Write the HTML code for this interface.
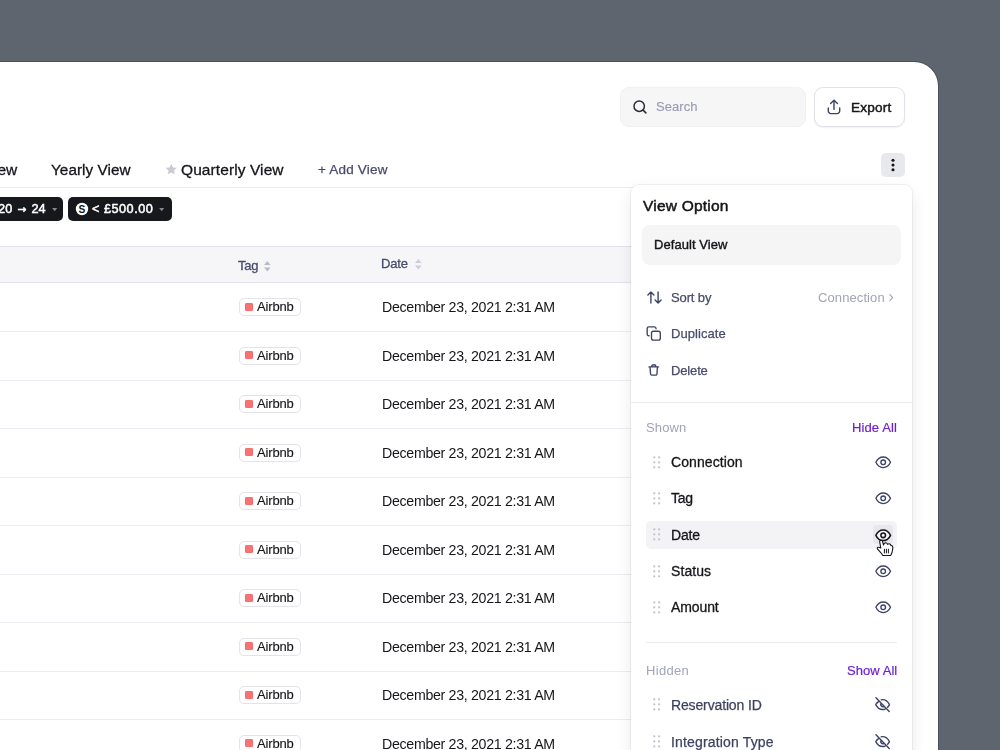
<!DOCTYPE html>
<html lang="en"><head><meta charset="utf-8"><title>View Option</title>
<style>
*{box-sizing:border-box;margin:0;padding:0}
html,body{width:1000px;height:750px;overflow:hidden;background:#5e656e;font-family:"Liberation Sans",sans-serif;color:#15161a}
.abs,.t{position:absolute}
.t{white-space:nowrap;line-height:20px;height:20px;will-change:transform}
#card{position:absolute;left:-40px;top:62px;width:978px;height:720px;background:#fff;border-radius:24px;box-shadow:0 0 0 1px rgba(60,66,78,.55)}
.hl{position:absolute;height:1px;background:#e6e6ef}
.chip{position:absolute;top:197px;height:24px;background:#17181c;border-radius:5px;color:#fff}
.tag{position:absolute;left:238.5px;width:62px;height:18px;border:1px solid #e3e3e9;border-radius:5px;background:#fff}
.tag i{position:absolute;left:5.7px;top:3.7px;width:7.8px;height:7.8px;border-radius:1.8px;background:#f87272;box-shadow:inset 0 0 0 .6px #f56a6a}
#panel{position:absolute;left:631.4px;top:184.6px;width:281px;height:600px;background:#fff;border-radius:8px;box-shadow:0 0 0 1px rgba(20,20,40,.05),0 5px 16px rgba(20,20,40,.085)}
svg{position:absolute;overflow:visible}
</style></head><body>
<div id="card"></div>

<div class="abs" style="left:620px;top:87px;width:186px;height:40px;background:#f6f6f7;border-radius:9px;border:1px solid #f1f1f3"></div>
<svg style="left:632px;top:99px" width="16" height="16" viewBox="0 0 16 16" fill="none" stroke="#2c2e36" stroke-width="1.5" stroke-linecap="round"><circle cx="7.2" cy="7.2" r="5.2"/><path d="M11.1 11.1L13.9 13.9"/></svg>
<div class="t" style="left:656px;top:97.00px;font-size:13px;color:#999db4;letter-spacing:0.06px;-webkit-text-stroke:0.15px #999db4">Search</div>
<div class="abs" style="left:814px;top:87px;width:91px;height:40px;background:#fff;border-radius:9px;border:1px solid #e2e2e8;box-shadow:0 1px 2px rgba(20,20,40,.06)"></div>
<svg style="left:826.4px;top:99px" width="16" height="16" viewBox="0 0 16 16" fill="none" stroke="#3d4266" stroke-width="1.4" stroke-linecap="round" stroke-linejoin="round"><path d="M8 10.4V1.5M4.6 4.6L8 1.2l3.400 3.400M2.300 9v3a2.600 2.600 0 0 0 2.600 2.600h6.200a2.600 2.600 0 0 0 2.600-2.600V9"/></svg>
<div class="t" style="left:851px;top:98.00px;font-size:13.6px;color:#15161a;letter-spacing:0.2px;-webkit-text-stroke:0.45px #15161a">Export</div>
<div class="t" style="left:-6px;top:160.00px;font-size:15.5px;color:#15161a;-webkit-text-stroke:0.3px #15161a">iew</div>
<div class="t" style="left:51px;top:160.00px;font-size:15.3px;color:#15161a;letter-spacing:0.04px;-webkit-text-stroke:0.3px #15161a">Yearly View</div>
<svg style="left:164.500px;top:163.200px" width="12.500" height="12.500" viewBox="0 0 24 24" fill="#c9cad3"><path d="M12 1.5l3.2 6.9 7.5.9-5.5 5.1 1.5 7.4L12 18.1l-6.7 3.7 1.5-7.4L1.3 9.3l7.5-.9z"/></svg>
<div class="t" style="left:181px;top:160.00px;font-size:15.5px;color:#15161a;letter-spacing:0.09px;-webkit-text-stroke:0.3px #15161a">Quarterly View</div>
<div class="t" style="left:318px;top:160.00px;font-size:13.5px;color:#474c6b;letter-spacing:0.2px;-webkit-text-stroke:0.25px #474c6b">+ Add View</div>
<div class="hl" style="left:0;top:187px;width:905px;background:#ececf1"></div>
<div class="abs" style="left:881px;top:152.5px;width:24px;height:24px;background:#e8e9ed;border-radius:5px"></div>
<svg style="left:881px;top:152.5px" width="24" height="24" viewBox="0 0 24 24" fill="#15161a"><circle cx="12" cy="7.2" r="1.55"/><circle cx="12" cy="12" r="1.55"/><circle cx="12" cy="16.8" r="1.55"/></svg>
<div class="chip" style="left:-60px;width:123px">
<div class="t" style="left:58px;top:2.00px;font-size:12.7px;color:#fff;letter-spacing:0.1px;-webkit-text-stroke:0.5px #fff">20 <span style="font-family:'DejaVu Sans',sans-serif;font-size:10.6px;letter-spacing:0;margin:0 1.3px 0 1.7px">→</span> 24</div>
<svg style="left:112px;top:10.5px" width="5.4" height="3.4" viewBox="0 0 6 4" fill="#85878f"><path d="M0 0h6L3 3.8z"/></svg></div>
<div class="chip" style="left:67.7px;width:104.6px"><svg style="left:7.2px;top:5px" width="14" height="14" viewBox="0 0 14 14"><circle cx="7" cy="7" r="6.2" fill="#fff"/><text x="7" y="10.6" text-anchor="middle" font-size="10.2" font-weight="bold" fill="#17181c" font-family="Liberation Sans, sans-serif">S</text></svg>
<div class="t" style="left:24.3px;top:2.00px;font-size:12.7px;color:#fff;letter-spacing:0.5px;-webkit-text-stroke:0.5px #fff">&lt; £500.00</div>
<svg style="left:91.5px;top:10.5px" width="5.4" height="3.4" viewBox="0 0 6 4" fill="#85878f"><path d="M0 0h6L3 3.8z"/></svg></div>
<div class="abs" style="left:0;top:246px;width:905px;height:36.500px;background:#f6f6f8;border-top:1px solid #e3e3ee;border-bottom:1px solid #e3e3ee"></div>
<div class="t" style="left:238px;top:256.00px;font-size:13px;color:#474c6b;letter-spacing:-0.25px;-webkit-text-stroke:0.3px #474c6b">Tag</div>
<svg style="left:263.7px;top:260.8px" width="6.6" height="10.4" viewBox="0 0 7 11" fill="#b9bac6"><path d="M0 4.200L3.500 0 7 4.200z"/><path d="M0 6.800L3.500 11 7 6.800z"/></svg>
<div class="t" style="left:381px;top:254.00px;font-size:13px;color:#474c6b;letter-spacing:-0.15px;-webkit-text-stroke:0.3px #474c6b">Date</div>
<svg style="left:414.600px;top:259px" width="6.600" height="10.400" viewBox="0 0 7 11" fill="#cdced7"><path d="M0 4.200L3.500 0 7 4.200z"/><path d="M0 6.800L3.500 11 7 6.800z"/></svg>
<div class="tag" style="top:298.30px"><i></i></div>
<div class="t" style="left:257.3px;top:297.00px;font-size:13px;color:#15161a;letter-spacing:-0.15px;-webkit-text-stroke:0.15px #15161a">Airbnb</div>
<div class="t" style="left:381.5px;top:297.00px;font-size:14.2px;color:#15161a;letter-spacing:-0.31px">December 23, 2021 2:31 AM</div>
<div class="hl" style="left:0;top:331.0px;width:905px;background:#ececf2"></div>
<div class="tag" style="top:346.80px"><i></i></div>
<div class="t" style="left:257.3px;top:345.50px;font-size:13px;color:#15161a;letter-spacing:-0.15px;-webkit-text-stroke:0.15px #15161a">Airbnb</div>
<div class="t" style="left:381.5px;top:345.50px;font-size:14.2px;color:#15161a;letter-spacing:-0.31px">December 23, 2021 2:31 AM</div>
<div class="hl" style="left:0;top:379.5px;width:905px;background:#ececf2"></div>
<div class="tag" style="top:395.30px"><i></i></div>
<div class="t" style="left:257.3px;top:394.00px;font-size:13px;color:#15161a;letter-spacing:-0.15px;-webkit-text-stroke:0.15px #15161a">Airbnb</div>
<div class="t" style="left:381.5px;top:394.00px;font-size:14.2px;color:#15161a;letter-spacing:-0.31px">December 23, 2021 2:31 AM</div>
<div class="hl" style="left:0;top:428.0px;width:905px;background:#ececf2"></div>
<div class="tag" style="top:443.80px"><i></i></div>
<div class="t" style="left:257.3px;top:442.50px;font-size:13px;color:#15161a;letter-spacing:-0.15px;-webkit-text-stroke:0.15px #15161a">Airbnb</div>
<div class="t" style="left:381.5px;top:442.50px;font-size:14.2px;color:#15161a;letter-spacing:-0.31px">December 23, 2021 2:31 AM</div>
<div class="hl" style="left:0;top:476.5px;width:905px;background:#ececf2"></div>
<div class="tag" style="top:492.30px"><i></i></div>
<div class="t" style="left:257.3px;top:491.00px;font-size:13px;color:#15161a;letter-spacing:-0.15px;-webkit-text-stroke:0.15px #15161a">Airbnb</div>
<div class="t" style="left:381.5px;top:491.00px;font-size:14.2px;color:#15161a;letter-spacing:-0.31px">December 23, 2021 2:31 AM</div>
<div class="hl" style="left:0;top:525.0px;width:905px;background:#ececf2"></div>
<div class="tag" style="top:540.80px"><i></i></div>
<div class="t" style="left:257.3px;top:539.50px;font-size:13px;color:#15161a;letter-spacing:-0.15px;-webkit-text-stroke:0.15px #15161a">Airbnb</div>
<div class="t" style="left:381.5px;top:539.50px;font-size:14.2px;color:#15161a;letter-spacing:-0.31px">December 23, 2021 2:31 AM</div>
<div class="hl" style="left:0;top:573.5px;width:905px;background:#ececf2"></div>
<div class="tag" style="top:589.30px"><i></i></div>
<div class="t" style="left:257.3px;top:588.00px;font-size:13px;color:#15161a;letter-spacing:-0.15px;-webkit-text-stroke:0.15px #15161a">Airbnb</div>
<div class="t" style="left:381.5px;top:588.00px;font-size:14.2px;color:#15161a;letter-spacing:-0.31px">December 23, 2021 2:31 AM</div>
<div class="hl" style="left:0;top:622.0px;width:905px;background:#ececf2"></div>
<div class="tag" style="top:637.80px"><i></i></div>
<div class="t" style="left:257.3px;top:636.50px;font-size:13px;color:#15161a;letter-spacing:-0.15px;-webkit-text-stroke:0.15px #15161a">Airbnb</div>
<div class="t" style="left:381.5px;top:636.50px;font-size:14.2px;color:#15161a;letter-spacing:-0.31px">December 23, 2021 2:31 AM</div>
<div class="hl" style="left:0;top:670.5px;width:905px;background:#ececf2"></div>
<div class="tag" style="top:686.30px"><i></i></div>
<div class="t" style="left:257.3px;top:685.00px;font-size:13px;color:#15161a;letter-spacing:-0.15px;-webkit-text-stroke:0.15px #15161a">Airbnb</div>
<div class="t" style="left:381.5px;top:685.00px;font-size:14.2px;color:#15161a;letter-spacing:-0.31px">December 23, 2021 2:31 AM</div>
<div class="hl" style="left:0;top:719.0px;width:905px;background:#ececf2"></div>
<div class="tag" style="top:734.80px"><i></i></div>
<div class="t" style="left:257.3px;top:733.50px;font-size:13px;color:#15161a;letter-spacing:-0.15px;-webkit-text-stroke:0.15px #15161a">Airbnb</div>
<div class="t" style="left:381.5px;top:733.50px;font-size:14.2px;color:#15161a;letter-spacing:-0.31px">December 23, 2021 2:31 AM</div>
<div class="hl" style="left:0;top:767.5px;width:905px;background:#ececf2"></div>
<div id="panel"></div>
<div class="t" style="left:643px;top:196.00px;font-size:15.5px;color:#15161a;letter-spacing:0.22px;-webkit-text-stroke:0.5px #15161a">View Option</div>
<div class="abs" style="left:642px;top:224.5px;width:259px;height:40px;background:#f5f5f6;border-radius:8px"></div>
<div class="t" style="left:654px;top:235.20px;font-size:13px;color:#15161a;letter-spacing:0.05px;-webkit-text-stroke:0.4px #15161a">Default View</div>
<svg style="left:646.6px;top:290.6px" width="15" height="13" viewBox="0 0 15 13" fill="none" stroke="#3d4266" stroke-width="1.4" stroke-linecap="round" stroke-linejoin="round"><path d="M3.9 12V1.2M0.9 4.1l3-3 3 3M11.1 1v10.8M8.1 8.9l3 3 3-3"/></svg>
<div class="t" style="left:671px;top:287.60px;font-size:13px;color:#474c6b;letter-spacing:-0.13px;-webkit-text-stroke:0.25px #474c6b">Sort by</div>
<div class="t" style="left:818px;top:287.60px;font-size:13px;color:#a2a5b7;letter-spacing:0.1px">Connection</div>
<svg style="left:889px;top:294px" width="4.5" height="7.4" viewBox="0 0 5 9" fill="none" stroke="#a2a5b7" stroke-width="1.4" stroke-linecap="round" stroke-linejoin="round"><path d="M0.8 0.8L4.2 4.5 0.8 8.2"/></svg>
<svg style="left:646.2px;top:326.2px" width="15.5" height="15" viewBox="0 0 16 16" fill="none" stroke="#3d4266" stroke-width="1.45" stroke-linecap="round" stroke-linejoin="round"><rect x="5.6" y="5.6" width="9.4" height="9.4" rx="2"/><path d="M3 10.4H2.6a1.6 1.6 0 0 1-1.6-1.6V2.6A1.6 1.6 0 0 1 2.6 1h6.2a1.6 1.6 0 0 1 1.6 1.6V3"/></svg>
<div class="t" style="left:671px;top:324.00px;font-size:13px;color:#474c6b;letter-spacing:0.06px;-webkit-text-stroke:0.25px #474c6b">Duplicate</div>
<svg style="left:648px;top:363.9px" width="11.5" height="12" viewBox="0 0 14 15" fill="none" stroke="#3d4266" stroke-width="1.7" stroke-linecap="round" stroke-linejoin="round"><path d="M1 3.6h12M4.6 3.4V2.2a1 1 0 0 1 1-1h2.8a1 1 0 0 1 1 1v1.2M2.4 3.8l.6 8.6a1.6 1.6 0 0 0 1.6 1.5h4.8a1.6 1.6 0 0 0 1.6-1.5l.6-8.6"/></svg>
<div class="t" style="left:671px;top:360.50px;font-size:13px;color:#474c6b;letter-spacing:-0.15px;-webkit-text-stroke:0.25px #474c6b">Delete</div>
<div class="hl" style="left:631px;top:402px;width:281px;background:#ececf0"></div>
<div class="t" style="left:646px;top:418.00px;font-size:13px;color:#a2a5b7;letter-spacing:0.12px">Shown</div>
<div class="t" style="right:103px;top:418.00px;font-size:13px;color:#6f1fd4;letter-spacing:0.12px;-webkit-text-stroke:0.2px #6f1fd4">Hide All</div>
<div class="abs" style="left:646px;top:520.7px;width:251px;height:28.3px;background:#f3f3f5;border-radius:5px"></div>
<div class="abs" style="left:873px;top:525px;width:20px;height:19px;background:#e8e8ec;border-radius:4px"></div>
<svg style="left:652.5px;top:455.70px" width="7.5" height="12.6" viewBox="0 0 7.5 12.6" fill="#c5c6d4"><rect x="0.19999999999999996" y="0.2" width="2.2" height="2.2" rx=".8"/><rect x="0.19999999999999996" y="5.2" width="2.2" height="2.2" rx=".8"/><rect x="0.19999999999999996" y="10.2" width="2.2" height="2.2" rx=".8"/><rect x="5.0" y="0.2" width="2.2" height="2.2" rx=".8"/><rect x="5.0" y="5.2" width="2.2" height="2.2" rx=".8"/><rect x="5.0" y="10.2" width="2.2" height="2.2" rx=".8"/></svg>
<div class="t" style="left:671px;top:452.00px;font-size:14px;color:#15161a;letter-spacing:0.09px;-webkit-text-stroke:0.3px #15161a">Connection</div>
<svg style="left:874.5px;top:455.50px" width="16.4" height="12.6" viewBox="0 0 17 13" fill="none" stroke="#3d4266" stroke-width="1.4" stroke-linecap="round" stroke-linejoin="round"><path d="M0.9 6.5C2.6 3 5.3 1 8.5 1s5.9 2 7.6 5.5C14.4 10 11.7 12 8.5 12S2.6 10 .9 6.5z"/><circle cx="8.5" cy="6.5" r="2.4"/></svg>
<svg style="left:652.5px;top:492.00px" width="7.5" height="12.6" viewBox="0 0 7.5 12.6" fill="#c5c6d4"><rect x="0.19999999999999996" y="0.2" width="2.2" height="2.2" rx=".8"/><rect x="0.19999999999999996" y="5.2" width="2.2" height="2.2" rx=".8"/><rect x="0.19999999999999996" y="10.2" width="2.2" height="2.2" rx=".8"/><rect x="5.0" y="0.2" width="2.2" height="2.2" rx=".8"/><rect x="5.0" y="5.2" width="2.2" height="2.2" rx=".8"/><rect x="5.0" y="10.2" width="2.2" height="2.2" rx=".8"/></svg>
<div class="t" style="left:671px;top:488.30px;font-size:14px;color:#15161a;letter-spacing:-0.3px;-webkit-text-stroke:0.3px #15161a">Tag</div>
<svg style="left:874.5px;top:491.80px" width="16.4" height="12.6" viewBox="0 0 17 13" fill="none" stroke="#3d4266" stroke-width="1.4" stroke-linecap="round" stroke-linejoin="round"><path d="M0.9 6.5C2.6 3 5.3 1 8.5 1s5.9 2 7.6 5.5C14.4 10 11.7 12 8.5 12S2.6 10 .9 6.5z"/><circle cx="8.5" cy="6.5" r="2.4"/></svg>
<svg style="left:652.5px;top:528.30px" width="7.5" height="12.6" viewBox="0 0 7.5 12.6" fill="#c5c6d4"><rect x="0.19999999999999996" y="0.2" width="2.2" height="2.2" rx=".8"/><rect x="0.19999999999999996" y="5.2" width="2.2" height="2.2" rx=".8"/><rect x="0.19999999999999996" y="10.2" width="2.2" height="2.2" rx=".8"/><rect x="5.0" y="0.2" width="2.2" height="2.2" rx=".8"/><rect x="5.0" y="5.2" width="2.2" height="2.2" rx=".8"/><rect x="5.0" y="10.2" width="2.2" height="2.2" rx=".8"/></svg>
<div class="t" style="left:671px;top:524.60px;font-size:14px;color:#15161a;letter-spacing:-0.2px;-webkit-text-stroke:0.3px #15161a">Date</div>
<svg style="left:874.5px;top:528.70px" width="16.4" height="12.6" viewBox="0 0 17 13" fill="#f8f8f9" stroke="#15161a" stroke-width="1.6" stroke-linecap="round" stroke-linejoin="round"><path d="M0.9 6.5C2.6 3 5.3 1 8.5 1s5.9 2 7.6 5.5C14.4 10 11.7 12 8.5 12S2.6 10 .9 6.5z"/><circle cx="8.5" cy="6.5" r="2.4"/></svg>
<svg style="left:652.5px;top:564.70px" width="7.5" height="12.6" viewBox="0 0 7.5 12.6" fill="#c5c6d4"><rect x="0.19999999999999996" y="0.2" width="2.2" height="2.2" rx=".8"/><rect x="0.19999999999999996" y="5.2" width="2.2" height="2.2" rx=".8"/><rect x="0.19999999999999996" y="10.2" width="2.2" height="2.2" rx=".8"/><rect x="5.0" y="0.2" width="2.2" height="2.2" rx=".8"/><rect x="5.0" y="5.2" width="2.2" height="2.2" rx=".8"/><rect x="5.0" y="10.2" width="2.2" height="2.2" rx=".8"/></svg>
<div class="t" style="left:671px;top:561.00px;font-size:14px;color:#15161a;letter-spacing:0.08px;-webkit-text-stroke:0.3px #15161a">Status</div>
<svg style="left:874.5px;top:564.50px" width="16.4" height="12.6" viewBox="0 0 17 13" fill="none" stroke="#3d4266" stroke-width="1.4" stroke-linecap="round" stroke-linejoin="round"><path d="M0.9 6.5C2.6 3 5.3 1 8.5 1s5.9 2 7.6 5.5C14.4 10 11.7 12 8.5 12S2.6 10 .9 6.5z"/><circle cx="8.5" cy="6.5" r="2.4"/></svg>
<svg style="left:652.5px;top:601.10px" width="7.5" height="12.6" viewBox="0 0 7.5 12.6" fill="#c5c6d4"><rect x="0.19999999999999996" y="0.2" width="2.2" height="2.2" rx=".8"/><rect x="0.19999999999999996" y="5.2" width="2.2" height="2.2" rx=".8"/><rect x="0.19999999999999996" y="10.2" width="2.2" height="2.2" rx=".8"/><rect x="5.0" y="0.2" width="2.2" height="2.2" rx=".8"/><rect x="5.0" y="5.2" width="2.2" height="2.2" rx=".8"/><rect x="5.0" y="10.2" width="2.2" height="2.2" rx=".8"/></svg>
<div class="t" style="left:671px;top:597.40px;font-size:14px;color:#15161a;letter-spacing:-0.1px;-webkit-text-stroke:0.3px #15161a">Amount</div>
<svg style="left:874.5px;top:600.90px" width="16.4" height="12.6" viewBox="0 0 17 13" fill="none" stroke="#3d4266" stroke-width="1.4" stroke-linecap="round" stroke-linejoin="round"><path d="M0.9 6.5C2.6 3 5.3 1 8.5 1s5.9 2 7.6 5.5C14.4 10 11.7 12 8.5 12S2.6 10 .9 6.5z"/><circle cx="8.5" cy="6.5" r="2.4"/></svg>
<div class="hl" style="left:646px;top:642px;width:251px;background:#ececf0"></div>
<div class="t" style="left:646px;top:660.50px;font-size:13px;color:#a2a5b7;letter-spacing:0.3px">Hidden</div>
<div class="t" style="right:103px;top:660.50px;font-size:13px;color:#6f1fd4;letter-spacing:0.05px;-webkit-text-stroke:0.2px #6f1fd4">Show All</div>
<svg style="left:652.5px;top:698.20px" width="7.5" height="12.6" viewBox="0 0 7.5 12.6" fill="#c5c6d4"><rect x="0.19999999999999996" y="0.2" width="2.2" height="2.2" rx=".8"/><rect x="0.19999999999999996" y="5.2" width="2.2" height="2.2" rx=".8"/><rect x="0.19999999999999996" y="10.2" width="2.2" height="2.2" rx=".8"/><rect x="5.0" y="0.2" width="2.2" height="2.2" rx=".8"/><rect x="5.0" y="5.2" width="2.2" height="2.2" rx=".8"/><rect x="5.0" y="10.2" width="2.2" height="2.2" rx=".8"/></svg>
<div class="t" style="left:671px;top:694.50px;font-size:14px;color:#3d4260;letter-spacing:-0.14px;-webkit-text-stroke:0.25px #3d4260">Reservation ID</div>
<svg style="left:875.2px;top:696.90px" width="15.2" height="15.2" viewBox="0 0 16 16" fill="none" stroke="#3d4266" stroke-width="1.45" stroke-linecap="round" stroke-linejoin="round"><path d="M6.5 3Q7.2 2.8 8 2.8C10.8 2.8 13.4 4.5 15.2 8Q14.4 9.6 13.3 10.8M3.7 4.9Q2 6 .8 8C2.6 11.5 5.2 13.2 8 13.2Q9.4 13.2 10.7 12.7M1 .8L15 15.2M6.3 6.6a2.4 2.4 0 0 0 3.3 3.3"/></svg>
<svg style="left:652.5px;top:735.20px" width="7.5" height="12.6" viewBox="0 0 7.5 12.6" fill="#c5c6d4"><rect x="0.19999999999999996" y="0.2" width="2.2" height="2.2" rx=".8"/><rect x="0.19999999999999996" y="5.2" width="2.2" height="2.2" rx=".8"/><rect x="0.19999999999999996" y="10.2" width="2.2" height="2.2" rx=".8"/><rect x="5.0" y="0.2" width="2.2" height="2.2" rx=".8"/><rect x="5.0" y="5.2" width="2.2" height="2.2" rx=".8"/><rect x="5.0" y="10.2" width="2.2" height="2.2" rx=".8"/></svg>
<div class="t" style="left:671px;top:731.50px;font-size:14px;color:#3d4260;letter-spacing:0.16px;-webkit-text-stroke:0.25px #3d4260">Integration Type</div>
<svg style="left:875.2px;top:733.90px" width="15.2" height="15.2" viewBox="0 0 16 16" fill="none" stroke="#3d4266" stroke-width="1.45" stroke-linecap="round" stroke-linejoin="round"><path d="M6.5 3Q7.2 2.8 8 2.8C10.8 2.8 13.4 4.5 15.2 8Q14.4 9.6 13.3 10.8M3.7 4.9Q2 6 .8 8C2.6 11.5 5.2 13.2 8 13.2Q9.4 13.2 10.7 12.7M1 .8L15 15.2M6.3 6.6a2.4 2.4 0 0 0 3.3 3.3"/></svg>
<svg style="left:865px;top:515px" width="40" height="50" viewBox="0 0 40 50"><path d="M15.8 33L14.7 26.8Q14.6 25.4 16.1 25.3Q17.4 25.3 17.6 26.6L18.5 30Q19 28 20.6 27.8Q22.2 27.8 22.6 29.4Q23.6 28.5 24.8 28.9Q25.9 29.4 25.9 30.6Q27 30.3 27.5 31.2Q28 32.2 27.7 34L27 37.5Q26.6 39 25.6 40.5L17.8 40.5Q16.8 38.8 15.3 37.2L12.6 34.2Q11.8 33 13 32.3Q14 31.9 15.8 33Z" fill="#fff" stroke="#15161a" stroke-width="1.1" stroke-linejoin="round"/><path d="M19.4 34.2V38M21.4 34.2V38M23.4 34.2V38" stroke="#15161a" stroke-width="1" stroke-linecap="round" fill="none"/></svg>
</body></html>
